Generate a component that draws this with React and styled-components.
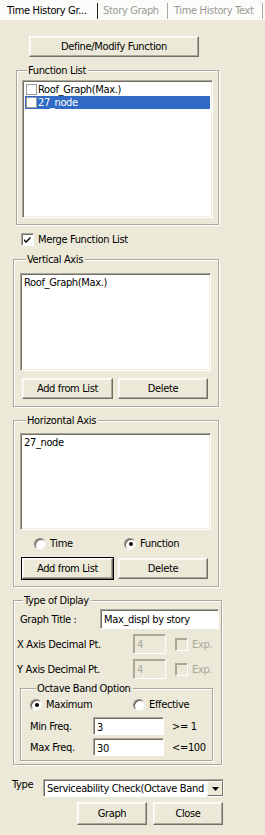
import React from 'react'
import styled, { createGlobalStyle } from 'styled-components'

const face = '#ece9d8'
const shadow = '#aca899'
const darkShadow = '#716f64'
const selBlue = '#316ac5'

const GlobalStyle = createGlobalStyle`
  html, body {
    margin: 0;
    padding: 0;
    background: ${face};
  }
  body {
    font-family: "DejaVu Sans Condensed", "DejaVu Sans", sans-serif;
    font-size: 11px;
    letter-spacing: -0.35px;
    color: #000;
  }
`

const Dialog = styled.div`
  width: 265px;
  height: 835px;
  background: ${face};
  overflow: hidden;
`

const TabStrip = styled.div`
  display: flex;
  align-items: center;
  height: 20px;
  background: #fbfbf9;
`

const Tab = styled.div`
  display: flex;
  align-items: center;
  box-sizing: border-box;
  width: ${(p) => p.$w}px;
  height: 16px;
  padding-left: ${(p) => p.$lead}px;
  color: ${(p) => (p.$active ? '#000' : '#9a9a94')};
  border-right: 1px solid ${(p) => (p.$active ? '#1e1e1e' : '#a9a9a2')};
  white-space: nowrap;
  line-height: 16px;
  margin-top: 2px;
  flex-shrink: 0;
`

const Body = styled.div`
  display: flex;
  flex-direction: column;
`

const Button = styled.button`
  box-sizing: border-box;
  font: inherit;
  letter-spacing: inherit;
  color: #000;
  background: ${face};
  width: ${(p) => p.$w}px;
  height: ${(p) => p.$h || 21}px;
  padding: 0;
  border: 1px solid;
  border-color: #fff ${darkShadow} ${darkShadow} #fff;
  box-shadow: inset -1px -1px 0 ${shadow}, inset 1px 1px 0 #f6f5ef;
  outline: ${(p) => (p.$default ? '1px solid #000' : 'none')};
  flex-shrink: 0;
`

const DefineButton = styled(Button)`
  margin: 16px 0 0 29px;
`

const Group = styled.fieldset`
  box-sizing: border-box;
  width: ${(p) => p.$w}px;
  margin: ${(p) => p.$mt}px 0 0 ${(p) => p.$ml}px;
  padding: ${(p) => p.$pad};
  border: 1px solid ${shadow};
  box-shadow: inset 1px 1px 0 #fff, 1px 1px 0 #fff;
  min-width: 0;
  display: flex;
  flex-direction: column;
`

const Legend = styled.legend`
  position: relative;
  padding: 0 2px 0 1px;
  margin-left: ${(p) => p.$ml || 5}px;
  line-height: 13px;
  height: 13px;
  background: ${face};
`

const ListBox = styled.div`
  box-sizing: border-box;
  width: ${(p) => p.$w}px;
  height: ${(p) => p.$h}px;
  background: #fff;
  border: 1px solid;
  border-color: ${shadow} #fff #fff ${shadow};
  box-shadow: inset 1px 1px 0 ${darkShadow}, inset -1px -1px 0 #f1efe2;
  padding: 2px;
  display: flex;
  flex-direction: column;
`

const ListItem = styled.div`
  display: flex;
  align-items: center;
  height: 13px;
  line-height: 13px;
  padding-left: ${(p) => p.$indent || 0}px;
  background: ${(p) => (p.$selected ? selBlue : 'transparent')};
  color: ${(p) => (p.$selected ? '#fff' : '#000')};
  white-space: nowrap;
`

const ItemCheck = styled.span`
  box-sizing: border-box;
  width: 11px;
  height: 11px;
  margin: 0 1px 0 1px;
  background: #fff;
  border: 1px solid #9c9c9c;
  flex-shrink: 0;
`

const CheckRow = styled.label`
  display: flex;
  align-items: center;
  height: 13px;
  gap: 4px;
  margin: ${(p) => p.$m || 0};
`

const CheckBox = styled.span`
  box-sizing: border-box;
  width: 13px;
  height: 13px;
  flex-shrink: 0;
  background: ${(p) => (p.$disabled ? face : '#fff')};
  border: 1px solid;
  border-color: ${shadow} #fff #fff ${shadow};
  box-shadow: inset 1px 1px 0 ${(p) => (p.$disabled ? shadow : darkShadow)};
  display: flex;
  align-items: center;
  justify-content: center;
`

const ButtonRow = styled.div`
  display: flex;
  gap: ${(p) => p.$gap}px;
  margin: ${(p) => p.$m};
`

const RadioRow = styled.div`
  display: flex;
  align-items: center;
  height: 13px;
  margin: ${(p) => p.$m};
`

const RadioLabel = styled.label`
  display: flex;
  align-items: center;
  gap: 4px;
  width: ${(p) => p.$w}px;
  flex-shrink: 0;
`

const Radio = styled.span`
  box-sizing: border-box;
  width: 12px;
  height: 12px;
  border-radius: 50%;
  background: #fff;
  border: 1px solid;
  border-color: #8a897e #f4f3ee #f4f3ee #8a897e;
  box-shadow: inset 1px 1px 0 #5e5d55;
  display: flex;
  align-items: center;
  justify-content: center;
  flex-shrink: 0;

  &::after {
    content: '';
    display: ${(p) => (p.$on ? 'block' : 'none')};
    width: 4px;
    height: 4px;
    border-radius: 50%;
    background: #000;
    margin: 1px 0 0 1px;
  }
`

const FieldRow = styled.div`
  display: flex;
  align-items: center;
  height: ${(p) => p.$h || 20}px;
  margin: ${(p) => p.$m};
`

const FieldLabel = styled.span`
  width: ${(p) => p.$w}px;
  padding-left: ${(p) => p.$pl || 0}px;
  flex-shrink: 0;
  white-space: nowrap;
  color: ${(p) => (p.$grey ? '#aca899' : '#000')};
`

const TextBox = styled.div`
  box-sizing: border-box;
  width: ${(p) => p.$w}px;
  height: ${(p) => p.$h || 20}px;
  background: ${(p) => (p.$disabled ? face : '#fff')};
  color: ${(p) => (p.$disabled ? shadow : '#000')};
  border: 1px solid;
  border-color: ${shadow} #fff #fff ${shadow};
  box-shadow: inset 1px 1px 0 ${(p) => (p.$disabled ? shadow : darkShadow)};
  padding: 3px 0 0 3px;
  line-height: 13px;
  flex-shrink: 0;
  white-space: nowrap;
  overflow: hidden;
`

const Hint = styled.span`
  margin-left: 8px;
`

const TypeRow = styled.div`
  display: flex;
  align-items: flex-start;
  margin: 14px 0 0 12px;
`

const TypeLabel = styled.span`
  width: 31px;
  line-height: 13px;
  margin-top: -1px;
`

const Combo = styled.div`
  box-sizing: border-box;
  width: 181px;
  height: 18px;
  display: flex;
  background: #fff;
  border: 1px solid;
  border-color: ${shadow} #fff #fff ${shadow};
  box-shadow: inset 1px 1px 0 ${darkShadow};
  padding: 1px 0 0 1px;
`

const ComboText = styled.span`
  flex: 1;
  padding-left: 2px;
  line-height: 15px;
  white-space: nowrap;
  overflow: hidden;
`

const ComboArrow = styled.span`
  box-sizing: border-box;
  width: 16px;
  height: 15px;
  background: ${face};
  border: 1px solid;
  border-color: #fff ${darkShadow} ${darkShadow} #fff;
  display: flex;
  align-items: center;
  justify-content: center;
`

const Check = () => (
  <svg width="9" height="9" viewBox="0 0 9 9">
    <path d="M1 4 L3 6 L7.5 1.5 L7.5 3.5 L3 8 L1 6 Z" fill="#000" />
  </svg>
)

export default function App() {
  return (
    <Dialog>
      <GlobalStyle />
      <TabStrip>
        <Tab $active $lead={7} $w={98}>Time History Gr...</Tab>
        <Tab $lead={5} $w={70}>Story Graph</Tab>
        <Tab $lead={6} $w={95}>Time History Text</Tab>
      </TabStrip>
      <Body>
        <DefineButton $w={170}>Define/Modify Function</DefineButton>

        <Group $w={203} $mt={7} $ml={16} $pad="3px 5px 6px 5px">
          <Legend $ml={5}>Function List</Legend>
          <ListBox $w={191} $h={138}>
            <ListItem>
              <ItemCheck />
              Roof_Graph(Max.)
            </ListItem>
            <ListItem $selected>
              <ItemCheck />
              27_node
            </ListItem>
          </ListBox>
        </Group>

        <CheckRow $m="8px 0 0 21px">
          <CheckBox>
            <Check />
          </CheckBox>
          Merge Function List
        </CheckRow>

        <Group $w={206} $mt={7} $ml={13} $pad="7px 6px 7px 6px">
          <Legend $ml={6}>Vertical Axis</Legend>
          <ListBox $w={191} $h={98}>
            <ListItem $indent={1}>Roof_Graph(Max.)</ListItem>
          </ListBox>
          <ButtonRow $gap={5} $m="7px 0 0 2px">
            <Button $w={91}>Add from List</Button>
            <Button $w={90}>Delete</Button>
          </ButtonRow>
        </Group>

        <Group $w={206} $mt={7} $ml={13} $pad="6px 6px 7px 6px">
          <Legend $ml={6}>Horizontal Axis</Legend>
          <ListBox $w={191} $h={97}>
            <ListItem $indent={1}>27_node</ListItem>
          </ListBox>
          <RadioRow $m="7px 0 0 14px">
            <RadioLabel $w={90}>
              <Radio />
              Time
            </RadioLabel>
            <RadioLabel $w={90}>
              <Radio $on />
              Function
            </RadioLabel>
          </RadioRow>
          <ButtonRow $gap={5} $m="8px 0 0 2px">
            <Button $w={91} $default>Add from List</Button>
            <Button $w={90}>Delete</Button>
          </ButtonRow>
        </Group>

        <Group $w={209} $mt={7} $ml={13} $pad="2px 3px 3px 3px">
          <Legend $ml={6}>Type of Diplay</Legend>
          <FieldRow $m="0">
            <FieldLabel $w={80} $pl={3}>Graph Title :</FieldLabel>
            <TextBox $w={119}>Max_displ by story</TextBox>
          </FieldRow>
          <FieldRow $m="5px 0 0 0">
            <FieldLabel $w={116}>X Axis Decimal Pt.</FieldLabel>
            <TextBox $w={33} $disabled>4</TextBox>
            <CheckRow $m="0 0 0 9px">
              <CheckBox $disabled />
              <FieldLabel $grey>Exp.</FieldLabel>
            </CheckRow>
          </FieldRow>
          <FieldRow $m="5px 0 0 0">
            <FieldLabel $w={116}>Y Axis Decimal Pt.</FieldLabel>
            <TextBox $w={33} $disabled>4</TextBox>
            <CheckRow $m="0 0 0 9px">
              <CheckBox $disabled />
              <FieldLabel $grey>Exp.</FieldLabel>
            </CheckRow>
          </FieldRow>

          <Group $w={193} $mt={3} $ml={3} $pad="3px 9px 4px 9px">
            <Legend $ml={6}>Octave Band Option</Legend>
            <RadioRow $m="0">
              <RadioLabel $w={103}>
                <Radio $on />
                Maximum
              </RadioLabel>
              <RadioLabel $w={70}>
                <Radio />
                Effective
              </RadioLabel>
            </RadioRow>
            <FieldRow $h={18} $m="6px 0 0 0">
              <FieldLabel $w={63}>Min Freq.</FieldLabel>
              <TextBox $w={71} $h={18}>3</TextBox>
              <Hint>&gt;= 1</Hint>
            </FieldRow>
            <FieldRow $h={18} $m="3px 0 0 0">
              <FieldLabel $w={63}>Max Freq.</FieldLabel>
              <TextBox $w={71} $h={18}>30</TextBox>
              <Hint>&lt;=100</Hint>
            </FieldRow>
          </Group>
        </Group>

        <TypeRow>
          <TypeLabel>Type</TypeLabel>
          <Combo>
            <ComboText>Serviceability Check(Octave Band</ComboText>
            <ComboArrow>
              <svg width="7" height="4" viewBox="0 0 7 4">
                <path d="M0 0 H7 L3.5 4 Z" fill="#000" />
              </svg>
            </ComboArrow>
          </Combo>
        </TypeRow>

        <ButtonRow $gap={6} $m="5px 0 0 77px">
          <Button $w={70} $h={23}>Graph</Button>
          <Button $w={70} $h={23}>Close</Button>
        </ButtonRow>
      </Body>
    </Dialog>
  )
}
